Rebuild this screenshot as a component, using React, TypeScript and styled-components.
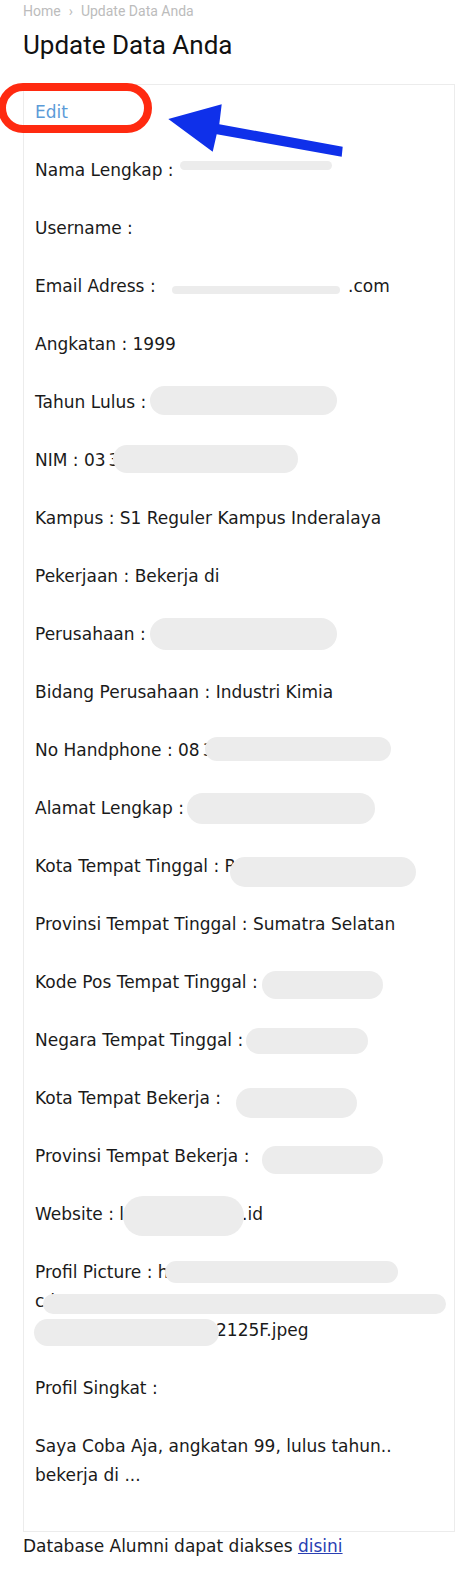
import React from "react";
import styled, { createGlobalStyle } from "styled-components";

const GlobalStyle = createGlobalStyle`
  html, body { margin: 0; padding: 0; background: #ffffff; }
  body { font-family: "DejaVu Sans", Verdana, sans-serif; color: #1a1a1a; }
`;

const Page = styled.div`
  position: relative;
  width: 474px;
  min-height: 1595px;
  padding: 0 19px 0 23px;
  box-sizing: border-box;
`;

const Breadcrumb = styled.nav`
  font-family: Roboto, "Liberation Sans", sans-serif;
  font-size: 14px;
  line-height: 18px;
  color: #bcbcbc;
  padding-top: 2px;
  display: flex;
  gap: 8px;
`;

const Title = styled.h1`
  margin: 8px 0 0;
  font-family: Roboto, "Liberation Sans", sans-serif;
  font-weight: 400;
  font-size: 26px;
  line-height: 34px;
  color: #111;
`;

const Card = styled.div`
  margin-top: 22px;
  border: 1px solid #ececec;
  padding: 13px 11px 12px;
  font-size: 17px;
  line-height: 29px;
  color: #1a1a1a;
  display: flex;
  flex-direction: column;
`;

const Line = styled.div<{ $gapAfter?: boolean }>`
  position: relative;
  min-height: 29px;
  white-space: nowrap;
  margin-bottom: ${(p) => (p.$gapAfter ? "29px" : "0")};
`;

const Para = styled.div`
  margin-bottom: 29px;
`;

const EditLink = styled.a`
  color: #5b9bd8;
  text-decoration: none;
`;

const Gap = styled.span<{ $w: number }>`
  display: inline-block;
  width: ${(p) => p.$w}px;
`;

/* Redaction blobs lie over the (hidden) personal data */
const Redact = styled.span<{ $x: number; $w: number; $h: number; $dy: number }>`
  position: absolute;
  left: ${(p) => p.$x - 35}px;
  top: ${(p) => 14.5 + p.$dy - p.$h / 2}px;
  width: ${(p) => p.$w}px;
  height: ${(p) => p.$h}px;
  border-radius: ${(p) => p.$h / 2}px;
  background: #ececec;
`;

const Footer = styled.div`
  font-size: 17px;
  line-height: 29px;
  color: #1a1a1a;
`;

const FooterLink = styled.a`
  color: #2a3fb3;
  text-decoration: underline;
`;

/* Annotation overlays drawn on top of the screenshot */
const RedOval = styled.div`
  position: absolute;
  left: -2px;
  top: 83px;
  width: 154px;
  height: 50px;
  box-sizing: border-box;
  border: 8px solid #ff2a10;
  border-radius: 25px;
  pointer-events: none;
`;

const ArrowSvg = styled.svg`
  position: absolute;
  left: 160px;
  top: 95px;
  width: 190px;
  height: 65px;
  pointer-events: none;
`;

type Pill = { x: number; w: number; h: number; dy: number };

const R = ({ x, w, h, dy }: Pill) => <Redact $x={x} $w={w} $h={h} $dy={dy} />;

export default function App() {
  return (
    <>
      <GlobalStyle />
      <Page>
        <Breadcrumb>
          <span>Home</span>
          <span>›</span>
          <span>Update Data Anda</span>
        </Breadcrumb>
        <Title>Update Data Anda</Title>
        <Card>
          <Line $gapAfter>
            <EditLink href="#">Edit</EditLink>
          </Line>
          <Line $gapAfter>
            Nama Lengkap :
            <R x={180} w={152} h={9} dy={-5.5} />
          </Line>
          <Line $gapAfter>Username :</Line>
          <Line $gapAfter>
            Email Adress : <Gap $w={187} />.com
            <R x={172} w={168} h={8} dy={3} />
          </Line>
          <Line $gapAfter>Angkatan : 1999</Line>
          <Line $gapAfter>
            Tahun Lulus :
            <R x={150} w={187} h={29} dy={-2.5} />
          </Line>
          <Line $gapAfter>
            NIM : 03<Gap $w={3} />3
            <R x={113} w={185} h={28} dy={-2} />
          </Line>
          <Line $gapAfter>Kampus : S1 Reguler Kampus Inderalaya</Line>
          <Line $gapAfter>Pekerjaan : Bekerja di</Line>
          <Line $gapAfter>
            Perusahaan :
            <R x={150} w={187} h={32} dy={-1} />
          </Line>
          <Line $gapAfter>Bidang Perusahaan : Industri Kimia</Line>
          <Line $gapAfter>
            No Handphone : 08<Gap $w={3} />3
            <R x={205} w={186} h={24} dy={-2} />
          </Line>
          <Line $gapAfter>
            Alamat Lengkap :
            <R x={187} w={188} h={31} dy={0} />
          </Line>
          <Line $gapAfter>
            Kota Tempat Tinggal : P
            <R x={230} w={186} h={30} dy={5} />
          </Line>
          <Line $gapAfter>Provinsi Tempat Tinggal : Sumatra Selatan</Line>
          <Line $gapAfter>
            Kode Pos Tempat Tinggal :
            <R x={262} w={121} h={28} dy={2} />
          </Line>
          <Line $gapAfter>
            Negara Tempat Tinggal :
            <R x={246} w={122} h={26} dy={0} />
          </Line>
          <Line $gapAfter>
            Kota Tempat Bekerja :
            <R x={236} w={121} h={30} dy={4} />
          </Line>
          <Line $gapAfter>
            Provinsi Tempat Bekerja :
            <R x={262} w={121} h={28} dy={3} />
          </Line>
          <Line $gapAfter>
            Website : l<Gap $w={118} />.id
            <R x={123} w={121} h={40} dy={1} />
          </Line>
          <Line>
            Profil Picture : h
            <R x={165} w={233} h={22} dy={-1} />
          </Line>
          <Line>
            cd
            <R x={43} w={403} h={20} dy={2} />
          </Line>
          <Line $gapAfter>
            <Gap $w={181} />2125F.jpeg
            <R x={34} w={185} h={27} dy={1.5} />
          </Line>
          <Line $gapAfter>Profil Singkat :</Line>
          <Para>Saya Coba Aja, angkatan 99, lulus tahun.. bekerja di ...</Para>
        </Card>
        <Footer>
          Database Alumni dapat diakses <FooterLink href="#">disini</FooterLink>
        </Footer>
        <RedOval />
        <ArrowSvg viewBox="0 0 190 65">
          <polygon
            points="8.3,24 61.7,9.3 59.3,29.3 182.7,51.7 181.7,61.7 56.7,39.3 52.7,56.7"
            fill="#0f30ea"
          />
        </ArrowSvg>
      </Page>
    </>
  );
}
